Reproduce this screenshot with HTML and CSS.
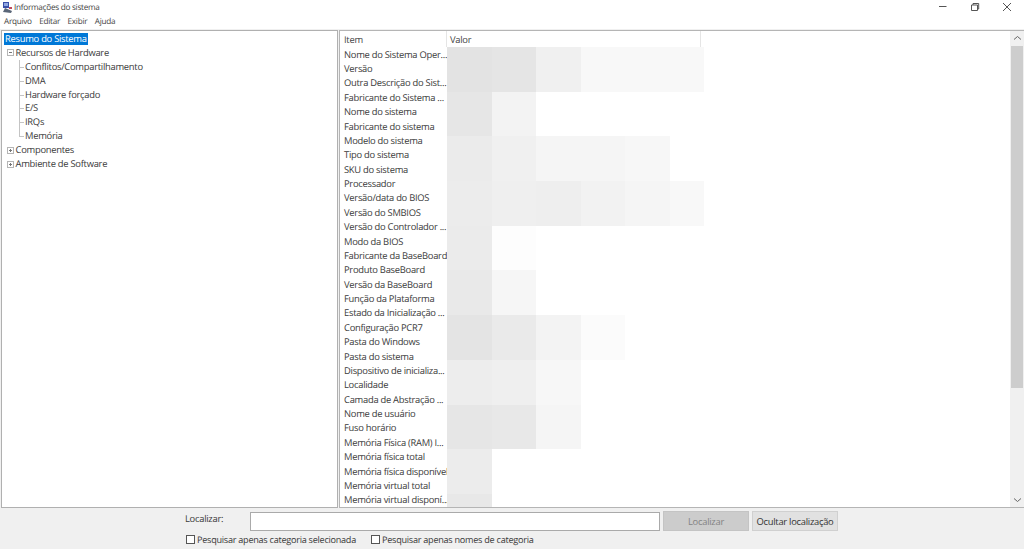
FILE: index.html
```html
<!DOCTYPE html>
<html lang="pt-BR">
<head>
<meta charset="utf-8">
<title>Informações do sistema</title>
<link rel="stylesheet" href="styles.css">
</head>
<body>
<div class="app">
  <header class="titlebar">
    <svg class="appicon" width="11" height="11" viewBox="0 0 11 11"><rect x="1" y="0" width="6" height="6" fill="#3a4fa8"/><rect x="2" y="1" width="4" height="3" fill="#8fa6e0"/><path d="M3 6 L10 9 L9 11 L1 10 Z" fill="#5a6678"/><rect x="7" y="5" width="3" height="2" fill="#c04a5a"/></svg>
    <span class="title">Informações do sistema</span>
    <div class="winbtns">
      <svg width="10" height="10" viewBox="0 0 10 10"><path d="M1 4.5H8.5" stroke="#555" fill="none"/></svg>
      <svg width="10" height="10" viewBox="0 0 10 10"><path d="M1.5 3H7.5V8.5H1.5ZM3 3V1.5H8.7V7H7.5" stroke="#555" fill="none"/></svg>
      <svg width="10" height="10" viewBox="0 0 10 10"><path d="M1 1L9 9M9 1L1 9" stroke="#555" fill="none"/></svg>
    </div>
  </header>
  <nav class="menubar"><span>Arquivo</span><span>Editar</span><span>Exibir</span><span>Ajuda</span></nav>
  <main class="panes">
    <section class="tree">
      <div class="node"><span class="sel">Resumo do Sistema</span></div>
      <div class="node top"><i class="exp minus"></i>Recursos de Hardware</div>
      <div class="children">
        <div class="node child">Conflitos/Compartilhamento</div>
        <div class="node child">DMA</div>
        <div class="node child">Hardware forçado</div>
        <div class="node child">E/S</div>
        <div class="node child">IRQs</div>
        <div class="node child last">Memória</div>
      </div>
      <div class="node top"><i class="exp plus"></i>Componentes</div>
      <div class="node top"><i class="exp plus"></i>Ambiente de Software</div>
    </section>
    <section class="list">
      <div class="listmain">
        <div class="head"><span class="hitem">Item</span><span class="hval">Valor</span></div>
        <div class="body">
          <div class="items">
            <div>Nome do Sistema Oper...</div>
            <div>Versão</div>
            <div>Outra Descrição do Sist...</div>
            <div>Fabricante do Sistema ...</div>
            <div>Nome do sistema</div>
            <div>Fabricante do sistema</div>
            <div>Modelo do sistema</div>
            <div>Tipo do sistema</div>
            <div>SKU do sistema</div>
            <div>Processador</div>
            <div>Versão/data do BIOS</div>
            <div>Versão do SMBIOS</div>
            <div>Versão do Controlador ...</div>
            <div>Modo da BIOS</div>
            <div>Fabricante da BaseBoard</div>
            <div>Produto BaseBoard</div>
            <div>Versão da BaseBoard</div>
            <div>Função da Plataforma</div>
            <div>Estado da Inicialização ...</div>
            <div>Configuração PCR7</div>
            <div>Pasta do Windows</div>
            <div>Pasta do sistema</div>
            <div>Dispositivo de inicializa...</div>
            <div>Localidade</div>
            <div>Camada de Abstração ...</div>
            <div>Nome de usuário</div>
            <div>Fuso horário</div>
            <div>Memória Física (RAM) I...</div>
            <div>Memória física total</div>
            <div>Memória física disponível</div>
            <div>Memória virtual total</div>
            <div>Memória virtual disponí...</div>
          </div>
          <div class="mosaic">
            <i style="background:#e3e3e3"></i><i style="background:#e5e5e5"></i><i style="background:#f0f0f0"></i><i style="background:#f8f8f8"></i><i style="background:#f8f8f8"></i><i style="background:#f8f8f8"></i>
            <i style="background:#e6e6e6"></i><i style="background:#f3f3f3"></i><i></i><i></i><i></i><i></i>
            <i style="background:#ebebeb"></i><i style="background:#f0f0f0"></i><i style="background:#f5f5f5"></i><i style="background:#f5f5f5"></i><i style="background:#f7f7f7"></i><i></i>
            <i style="background:#ececec"></i><i style="background:#efefef"></i><i style="background:#eeeeee"></i><i style="background:#f2f2f2"></i><i style="background:#f5f5f5"></i><i style="background:#f8f8f8"></i>
            <i style="background:#ebebeb"></i><i style="background:#fdfdfd"></i><i></i><i></i><i></i><i></i>
            <i style="background:#e9e9e9"></i><i style="background:#f6f6f6"></i><i></i><i></i><i></i><i></i>
            <i style="background:#e4e4e4"></i><i style="background:#eaeaea"></i><i style="background:#f3f3f3"></i><i style="background:#fbfbfb"></i><i></i><i></i>
            <i style="background:#ededed"></i><i style="background:#efefef"></i><i style="background:#f7f7f7"></i><i></i><i></i><i></i>
            <i style="background:#e6e6e6"></i><i style="background:#e8e8e8"></i><i style="background:#f5f5f5"></i><i></i><i></i><i></i>
            <i style="background:#ececec"></i><i></i><i></i><i></i><i></i><i></i>
            <i style="background:#e8e8e8"></i><i></i><i></i><i></i><i></i><i></i>
          </div>
        </div>
      </div>
      <div class="scrollbar">
        <svg width="9" height="6" viewBox="0 0 9 6"><path d="M1 4.5L4.5 1.5L8 4.5" stroke="#666" fill="none"/></svg>
        <div class="track"><div class="thumb"></div></div>
        <svg width="9" height="6" viewBox="0 0 9 6"><path d="M1 1.5L4.5 4.5L8 1.5" stroke="#666" fill="none"/></svg>
      </div>
    </section>
  </main>
  <footer class="findbar">
    <div class="findrow">
      <label class="findlabel">Localizar:</label>
      <div class="findinput"></div>
      <button class="btn disabled">Localizar</button>
      <button class="btn hide">Ocultar localização</button>
    </div>
    <div class="checks">
      <span class="check"><i class="box"></i>Pesquisar apenas categoria selecionada</span>
      <span class="check"><i class="box"></i>Pesquisar apenas nomes de categoria</span>
    </div>
  </footer>
</div>
</body>
</html>
```
FILE: styles.css
```css
* { box-sizing: border-box; }
html, body { margin: 0; padding: 0; }
body { width: 1024px; height: 549px; overflow: hidden; font-family: "Open Sans", "Noto Sans", sans-serif; font-size: 9.4px; letter-spacing: -0.27px; text-rendering: geometricPrecision; color: #3a3a3a; background: #f0f0f0; }
.app { display: flex; flex-direction: column; height: 549px; }
.titlebar { height: 14px; background: #fff; display: flex; align-items: center; padding-left: 2px; flex: none; }
.title { margin-left: 1px; color: #444; font-size: 8.2px; }
.winbtns { margin-left: auto; display: flex; gap: 22px; padding-right: 12px; margin-top: -1px; }
.menubar { height: 15px; background: #fff; display: flex; gap: 7.5px; align-items: center; padding-left: 4px; flex: none; font-size: 8.2px; color: #444; }
.panes { height: 479px; display: flex; flex: none; padding: 1px 0 0 1px; gap: 1px; background: #f0f0f0; }
.tree { width: 337px; background: #fff; border: 1px solid #b0b0b0; padding-top: 1px; }
.node { height: 13.9px; line-height: 13.9px; white-space: nowrap; display: flex; align-items: center; position: relative; }
.sel { background: #0078d7; color: #fff; padding: 0 1px; margin-left: 2px; height: 12.5px; line-height: 12.5px; }
.top { padding-left: 13.5px; }
.exp { position: absolute; left: 5px; top: 3.5px; width: 7px; height: 7px; border: 1px solid #b5b5b5; background: #fff; }
.exp::before { content: ""; position: absolute; left: 1px; right: 1px; top: 2px; height: 1px; background: #777; }
.plus::after { content: ""; position: absolute; top: 1px; bottom: 1px; left: 2px; width: 1px; background: #777; }
.children { margin-left: 17px; }
.child { padding-left: 6px; }
.child::before { content: ""; position: absolute; left: 0; top: 0; bottom: 0; border-left: 1px solid #c4c4c4; }
.child::after { content: ""; position: absolute; left: 0; top: 7px; width: 5px; border-top: 1px solid #c4c4c4; }
.child.last::before { bottom: 6px; }
.list { width: 685px; background: #fff; border: 1px solid #b5b5b5; border-right: 0; display: flex; }
.listmain { flex: 1; min-width: 0; display: flex; flex-direction: column; overflow: hidden; }
.head { height: 16px; flex: none; display: flex; align-items: center; color: #444; }
.hitem { width: 107px; padding-left: 4px; height: 100%; line-height: 17px; border-right: 1px solid #e5e5e5; }
.hval { width: 254px; padding-left: 3px; height: 100%; line-height: 17px; border-right: 1px solid #e5e5e5; }
.body { display: flex; flex: 1; min-height: 0; }
.items { width: 107px; flex: none; padding: 0.7px 0 0 4px; white-space: nowrap; }
.items div { height: 14.39px; line-height: 14.39px; }
.mosaic { display: grid; grid-template-columns: repeat(5, 44.5px) 34.5px; grid-template-rows: repeat(10, 44.7px) 13px; flex: none; }
.scrollbar { width: 14px; flex: none; background: #f0f0f0; display: flex; flex-direction: column; align-items: center; padding: 4px 0; }
.track { flex: 1; width: 100%; padding: 5px 1px 0 1px; }
.thumb { height: 342px; background: #cdcdcd; }
.findbar { flex: 1; padding-top: 3px; }
.findrow { display: flex; align-items: center; height: 20px; padding-left: 185px; }
.findlabel { width: 65px; margin-top: -5px; }
.findinput { width: 410px; height: 19px; background: #fff; border: 1px solid #aaa; }
.btn { font: inherit; letter-spacing: inherit; height: 20px; border: 1px solid #d0d0d0; background: #e1e1e1; color: #333; padding: 0; }
.disabled { width: 86px; margin-left: 3px; background: #ccc; border-color: #c4c4c4; color: #838383; }
.hide { width: 86px; margin-left: 3px; }
.checks { display: flex; padding: 2px 0 0 186px; font-size: 9.15px; }
.check { display: flex; align-items: center; width: 185px; white-space: nowrap; }
.box { width: 9px; height: 9px; border: 1px solid #555; background: #fff; margin-right: 2px; flex: none; }
```
